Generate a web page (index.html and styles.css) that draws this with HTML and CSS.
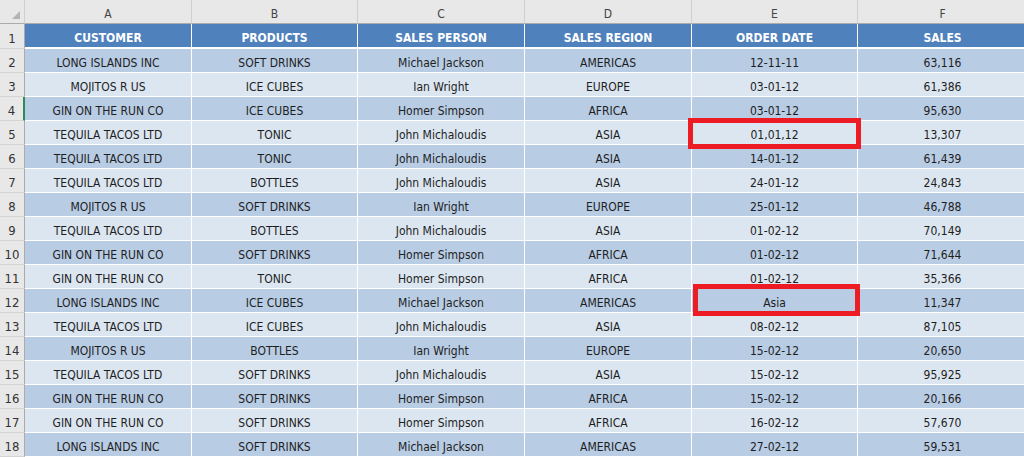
FILE: index.html
```html
<!DOCTYPE html>
<html>
<head>
<meta charset="utf-8">
<link rel="stylesheet" href="styles.css">
</head>
<body>
<div class="sheet">
  <div class="row colhead">
    <div class="corner"><span class="tri"></span></div>
    <div class="ch">A</div><div class="ch">B</div><div class="ch">C</div><div class="ch">D</div><div class="ch">E</div><div class="ch">F</div>
  </div>
  <div class="row hdr">
    <div class="rh">1</div>
    <div class="c">CUSTOMER</div><div class="c">PRODUCTS</div><div class="c">SALES PERSON</div><div class="c">SALES REGION</div><div class="c">ORDER DATE</div><div class="c">SALES</div>
  </div>
  <div class="row dark"><div class="rh">2</div><div class="c">LONG ISLANDS INC</div><div class="c">SOFT DRINKS</div><div class="c">Michael Jackson</div><div class="c">AMERICAS</div><div class="c">12-11-11</div><div class="c">63,116</div></div>
  <div class="row light"><div class="rh">3</div><div class="c">MOJITOS R US</div><div class="c">ICE CUBES</div><div class="c">Ian Wright</div><div class="c">EUROPE</div><div class="c">03-01-12</div><div class="c">61,386</div></div>
  <div class="row dark"><div class="rh sel">4</div><div class="c">GIN ON THE RUN CO</div><div class="c">ICE CUBES</div><div class="c">Homer Simpson</div><div class="c">AFRICA</div><div class="c">03-01-12</div><div class="c">95,630</div></div>
  <div class="row light"><div class="rh">5</div><div class="c">TEQUILA TACOS LTD</div><div class="c">TONIC</div><div class="c">John Michaloudis</div><div class="c">ASIA</div><div class="c">01,01,12</div><div class="c">13,307</div></div>
  <div class="row dark"><div class="rh">6</div><div class="c">TEQUILA TACOS LTD</div><div class="c">TONIC</div><div class="c">John Michaloudis</div><div class="c">ASIA</div><div class="c">14-01-12</div><div class="c">61,439</div></div>
  <div class="row light"><div class="rh">7</div><div class="c">TEQUILA TACOS LTD</div><div class="c">BOTTLES</div><div class="c">John Michaloudis</div><div class="c">ASIA</div><div class="c">24-01-12</div><div class="c">24,843</div></div>
  <div class="row dark"><div class="rh">8</div><div class="c">MOJITOS R US</div><div class="c">SOFT DRINKS</div><div class="c">Ian Wright</div><div class="c">EUROPE</div><div class="c">25-01-12</div><div class="c">46,788</div></div>
  <div class="row light"><div class="rh">9</div><div class="c">TEQUILA TACOS LTD</div><div class="c">BOTTLES</div><div class="c">John Michaloudis</div><div class="c">ASIA</div><div class="c">01-02-12</div><div class="c">70,149</div></div>
  <div class="row dark"><div class="rh">10</div><div class="c">GIN ON THE RUN CO</div><div class="c">SOFT DRINKS</div><div class="c">Homer Simpson</div><div class="c">AFRICA</div><div class="c">01-02-12</div><div class="c">71,644</div></div>
  <div class="row light"><div class="rh">11</div><div class="c">GIN ON THE RUN CO</div><div class="c">TONIC</div><div class="c">Homer Simpson</div><div class="c">AFRICA</div><div class="c">01-02-12</div><div class="c">35,366</div></div>
  <div class="row dark"><div class="rh">12</div><div class="c">LONG ISLANDS INC</div><div class="c">ICE CUBES</div><div class="c">Michael Jackson</div><div class="c">AMERICAS</div><div class="c">Asia</div><div class="c">11,347</div></div>
  <div class="row light"><div class="rh">13</div><div class="c">TEQUILA TACOS LTD</div><div class="c">ICE CUBES</div><div class="c">John Michaloudis</div><div class="c">ASIA</div><div class="c">08-02-12</div><div class="c">87,105</div></div>
  <div class="row dark"><div class="rh">14</div><div class="c">MOJITOS R US</div><div class="c">BOTTLES</div><div class="c">Ian Wright</div><div class="c">EUROPE</div><div class="c">15-02-12</div><div class="c">20,650</div></div>
  <div class="row light"><div class="rh">15</div><div class="c">TEQUILA TACOS LTD</div><div class="c">SOFT DRINKS</div><div class="c">John Michaloudis</div><div class="c">ASIA</div><div class="c">15-02-12</div><div class="c">95,925</div></div>
  <div class="row dark"><div class="rh">16</div><div class="c">GIN ON THE RUN CO</div><div class="c">SOFT DRINKS</div><div class="c">Homer Simpson</div><div class="c">AFRICA</div><div class="c">15-02-12</div><div class="c">20,166</div></div>
  <div class="row light"><div class="rh">17</div><div class="c">GIN ON THE RUN CO</div><div class="c">SOFT DRINKS</div><div class="c">Homer Simpson</div><div class="c">AFRICA</div><div class="c">16-02-12</div><div class="c">57,670</div></div>
  <div class="row dark"><div class="rh">18</div><div class="c">LONG ISLANDS INC</div><div class="c">SOFT DRINKS</div><div class="c">Michael Jackson</div><div class="c">AMERICAS</div><div class="c">27-02-12</div><div class="c">59,531</div></div>

  <div class="mark mark1"></div>
  <div class="mark mark2"></div>
</div>
</body>
</html>
```
FILE: styles.css
```css
html, body {
  margin: 0;
  padding: 0;
  background: #ffffff;
}
.sheet {
  position: relative;
  width: 1024px;
  height: 457px;
  overflow: hidden;
  font-family: "DejaVu Sans Condensed", "Liberation Sans", sans-serif;
  font-size: 12px;
  color: #1e1e1e;
}
.row {
  display: grid;
  grid-template-columns: 25px 167px 166px 167px 167px 166px 170px;
  height: 24px;
}
.row > div {
  box-sizing: border-box;
  display: flex;
  align-items: center;
  justify-content: center;
  white-space: nowrap;
  padding-top: 4px;
}
.colhead {
  height: 24px;
  background: #e8e8e8;
}
.colhead > div {
  border-bottom: 1px solid #ababab;
  border-right: 1px solid #d0d0d0;
  color: #444;
  font-size: 12px;
  padding-top: 5px;
}
.corner {
  position: relative;
}
.tri {
  position: absolute;
  right: 4px;
  bottom: 4px;
  width: 0;
  height: 0;
  border-left: 8px solid transparent;
  border-bottom: 8px solid #b4b4b4;
}
.rh {
  background: #e8e8e8;
  color: #333;
  font-size: 13px;
  border-right: 1px solid #ababab;
  border-bottom: 1px solid #d4d4d4;
}
.rh.sel {
  border-right: 2px solid #2f8a56;
}
.c {
  border-right: 1px solid #ffffff;
  border-bottom: 1px solid #ffffff;
}
.hdr {
  height: 25px;
}
.hdr .c {
  background: #4f81bd;
  color: #ffffff;
  font-weight: bold;
  border-bottom: 2px solid #ffffff;
}
.dark .c {
  background: #b8cce4;
}
.light .c {
  background: #dce6f1;
}
.mark {
  position: absolute;
  border: 5px solid #ed1c24;
  box-sizing: border-box;
}
.mark1 {
  left: 688px;
  top: 118px;
  width: 173px;
  height: 31px;
}
.mark2 {
  left: 693px;
  top: 284px;
  width: 167px;
  height: 32px;
}
```
